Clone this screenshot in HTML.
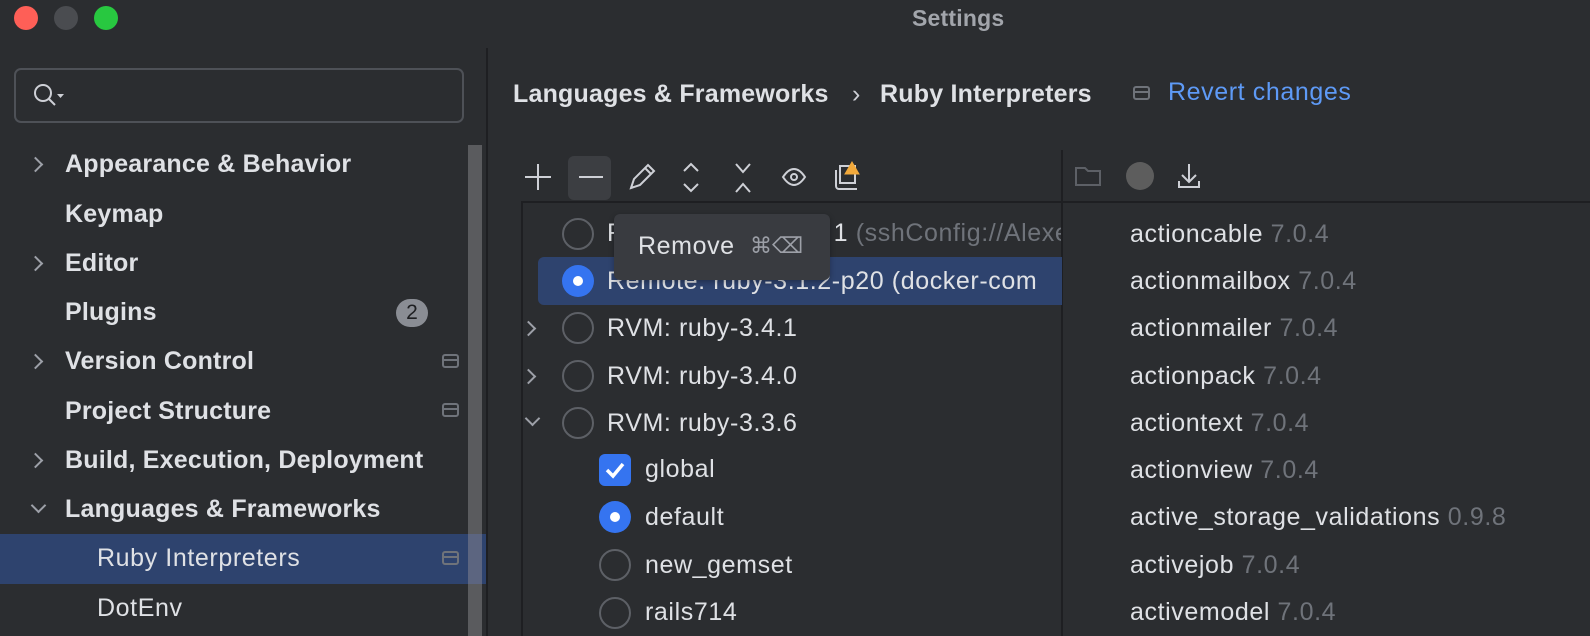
<!DOCTYPE html>
<html><head><meta charset="utf-8"><style>
*{margin:0;padding:0;box-sizing:border-box}
body{width:1590px;height:636px;background:#2b2d30;font-family:"Liberation Sans",sans-serif;color:#dfe1e5;position:relative;overflow:hidden}
.a{position:absolute;white-space:nowrap}
.sb{font-weight:bold;font-size:25px;letter-spacing:0.2px;line-height:30px}
.t{font-size:25px;letter-spacing:0.6px;line-height:30px}
.g{color:#6f737a}
.chev{position:absolute;width:11px;height:11px;border-right:2px solid #9da0a8;border-bottom:2px solid #9da0a8}
.rad{position:absolute;width:32px;height:32px;border-radius:50%;border:2px solid #5d6066}
.rsel{position:absolute;width:32px;height:32px;border-radius:50%;background:#3574f0}
.rsel:after{content:"";position:absolute;left:11px;top:11px;width:10px;height:10px;border-radius:50%;background:#fff}
.pin{position:absolute;width:17px;height:14px;border:2px solid #6f737a;border-radius:3px}
.pin:after{content:"";position:absolute;left:0;right:0;top:3px;border-top:2px solid #6f737a}
</style></head><body>
<div class="a" style="left:14px;top:6px;width:24px;height:24px;border-radius:50%;background:#fe5f57"></div>
<div class="a" style="left:54px;top:6px;width:24px;height:24px;border-radius:50%;background:#4a4c50"></div>
<div class="a" style="left:94px;top:6px;width:24px;height:24px;border-radius:50%;background:#28c840"></div>
<div class="a sb" style="left:912px;top:3px;color:#a2a5ab;font-size:23px">Settings</div>

<div class="a" style="left:14px;top:68px;width:450px;height:55px;border:2px solid #4e5157;border-radius:7px"></div>
<svg class="a" style="left:32px;top:82px" width="36" height="28" viewBox="0 0 36 28"><circle cx="11" cy="11" r="8" fill="none" stroke="#ced0d6" stroke-width="2"/><path d="M17 17l6 6" stroke="#ced0d6" stroke-width="2"/><path d="M25 12h7l-3.5 4z" fill="#ced0d6"/></svg>

<div class="a" style="left:0;top:534px;width:486px;height:50px;background:#2e436e"></div>
<div class="a" style="left:468px;top:145px;width:14px;height:491px;background:#5a5b5e"></div>
<div class="a" style="left:468px;top:534px;width:14px;height:50px;background:#5c6580"></div>
<div class="a" style="left:486px;top:48px;width:2px;height:588px;background:#1e1f22"></div>
<div class="chev" style="left:30px;top:159px;transform:rotate(-45deg)"></div>
<div class="a sb" style="left:65px;top:149px">Appearance &amp; Behavior</div>
<div class="a sb" style="left:65px;top:199px">Keymap</div>
<div class="chev" style="left:30px;top:258px;transform:rotate(-45deg)"></div>
<div class="a sb" style="left:65px;top:248px">Editor</div>
<div class="a sb" style="left:65px;top:297px">Plugins</div>
<div class="a" style="left:396px;top:299px;width:32px;height:28px;border-radius:14px;background:#8a8d94;color:#1e1f22;font-size:21px;text-align:center;line-height:28px">2</div>
<div class="chev" style="left:30px;top:356px;transform:rotate(-45deg)"></div>
<div class="a sb" style="left:65px;top:346px">Version Control</div>
<div class="pin" style="left:442px;top:354px"></div>
<div class="a sb" style="left:65px;top:396px">Project Structure</div>
<div class="pin" style="left:442px;top:403px"></div>
<div class="chev" style="left:30px;top:455px;transform:rotate(-45deg)"></div>
<div class="a sb" style="left:65px;top:445px">Build, Execution, Deployment</div>
<div class="chev" style="left:33px;top:500px;transform:rotate(45deg)"></div>
<div class="a sb" style="left:65px;top:494px">Languages &amp; Frameworks</div>
<div class="a t" style="left:97px;top:543px">Ruby Interpreters</div>
<div class="pin" style="left:442px;top:551px"></div>
<div class="a t" style="left:97px;top:593px">DotEnv</div>

<div class="a sb" style="left:513px;top:79px">Languages &amp; Frameworks</div>
<div class="a t" style="left:852px;top:79px;color:#ced0d6">›</div>
<div class="a sb" style="left:880px;top:79px">Ruby Interpreters</div>
<div class="pin" style="left:1133px;top:86px"></div>
<div class="a t" style="left:1168px;top:77px;color:#5e9af6">Revert changes</div>

<div class="a" style="left:568px;top:156px;width:43px;height:44px;background:#3c3e42;border-radius:6px"></div>
<svg class="a" style="left:520px;top:156px" width="350" height="44" viewBox="0 0 350 44" fill="none" stroke="#ced0d6" stroke-width="2">
<path d="M18 8v26M5 21h26"/>
<path d="M59 21h24"/>
<path d="M111 32l3-9 14-14 6 6-14 14zM125 12l6 6"/>
<path d="M164 15l7-7 7 7M164 28l7 7 7-7"/>
<path d="M216 8l7 8 7-8M216 36l7-8 7 8"/>
<path d="M263 21c4-6 8-8 11-8s7 2 11 8c-4 6-8 8-11 8s-7-2-11-8z"/><circle cx="274" cy="21" r="3"/>
<path d="M316 14v16a3 3 0 0 0 3 3h18M320 10h15v17h-15z" />
<path d="M332 6l7 12h-14z" fill="#f2a93b" stroke="#f2a93b" stroke-width="1"/>
</svg>
<div class="a" style="left:1061px;top:150px;width:2px;height:486px;background:#1e1f22"></div>
<svg class="a" style="left:1070px;top:156px" width="140" height="44" viewBox="0 0 140 44" fill="none">
<path d="M6 12h9l3 3h12v14H6z" stroke="#5d6066" stroke-width="2"/>
<circle cx="70" cy="20" r="14" fill="#5d5d5d"/>
<path d="M119 8v17M112 19l7 7 7-7M109 25v6h20v-6" stroke="#ced0d6" stroke-width="2"/>
</svg>
<div class="a" style="left:521px;top:201px;width:541px;height:2px;background:#1e1f22"></div>
<div class="a" style="left:521px;top:201px;width:2px;height:435px;background:#1e1f22"></div>
<div class="a" style="left:1063px;top:201px;width:527px;height:2px;background:#1e1f22"></div>

<div class="a" style="left:538px;top:257px;width:524px;height:48px;background:#2e436e;border-radius:6px 0 0 6px"></div>
<div class="rad" style="left:562px;top:218px"></div>
<div class="a t" style="left:607px;top:218px;width:454px;overflow:hidden">R<span style="margin-left:208px">1 </span><span class="g">(sshConfig://Alexe</span></div>
<div class="rsel" style="left:562px;top:265px"></div>
<div class="a t" style="left:607px;top:266px;width:454px;overflow:hidden">Remote: ruby-3.1.2-p20 (docker-com</div>
<div class="chev" style="left:523px;top:323px;transform:rotate(-45deg)"></div>
<div class="rad" style="left:562px;top:312px"></div>
<div class="a t" style="left:607px;top:313px">RVM: ruby-3.4.1</div>
<div class="chev" style="left:523px;top:371px;transform:rotate(-45deg)"></div>
<div class="rad" style="left:562px;top:360px"></div>
<div class="a t" style="left:607px;top:361px">RVM: ruby-3.4.0</div>
<div class="chev" style="left:527px;top:413px;transform:rotate(45deg)"></div>
<div class="rad" style="left:562px;top:407px"></div>
<div class="a t" style="left:607px;top:408px">RVM: ruby-3.3.6</div>
<div class="a" style="left:599px;top:454px;width:32px;height:32px;border-radius:6px;background:#3574f0"></div>
<svg class="a" style="left:599px;top:454px" width="32" height="32"><path d="M8 16l6 6 10-12" stroke="#fff" stroke-width="3.5" fill="none"/></svg>
<div class="a t" style="left:645px;top:454px">global</div>
<div class="rsel" style="left:599px;top:501px"></div>
<div class="a t" style="left:645px;top:502px">default</div>
<div class="rad" style="left:599px;top:549px"></div>
<div class="a t" style="left:645px;top:550px">new_gemset</div>
<div class="rad" style="left:599px;top:597px"></div>
<div class="a t" style="left:645px;top:597px">rails714</div>

<div class="a" style="left:614px;top:214px;width:216px;height:66px;background:#393b40;border-radius:6px;box-shadow:0 2px 6px rgba(0,0,0,.3)"></div>
<div class="a t" style="left:638px;top:231px">Remove</div>
<div class="a t" style="left:750px;top:231px;color:#9da0a8;font-size:22px;letter-spacing:0">⌘⌫</div>

<div class="a t" style="left:1130px;top:219px">actioncable <span class="g">7.0.4</span></div>
<div class="a t" style="left:1130px;top:266px">actionmailbox <span class="g">7.0.4</span></div>
<div class="a t" style="left:1130px;top:313px">actionmailer <span class="g">7.0.4</span></div>
<div class="a t" style="left:1130px;top:361px">actionpack <span class="g">7.0.4</span></div>
<div class="a t" style="left:1130px;top:408px">actiontext <span class="g">7.0.4</span></div>
<div class="a t" style="left:1130px;top:455px">actionview <span class="g">7.0.4</span></div>
<div class="a t" style="left:1130px;top:502px">active_storage_validations <span class="g">0.9.8</span></div>
<div class="a t" style="left:1130px;top:550px">activejob <span class="g">7.0.4</span></div>
<div class="a t" style="left:1130px;top:597px">activemodel <span class="g">7.0.4</span></div>
</body></html>
